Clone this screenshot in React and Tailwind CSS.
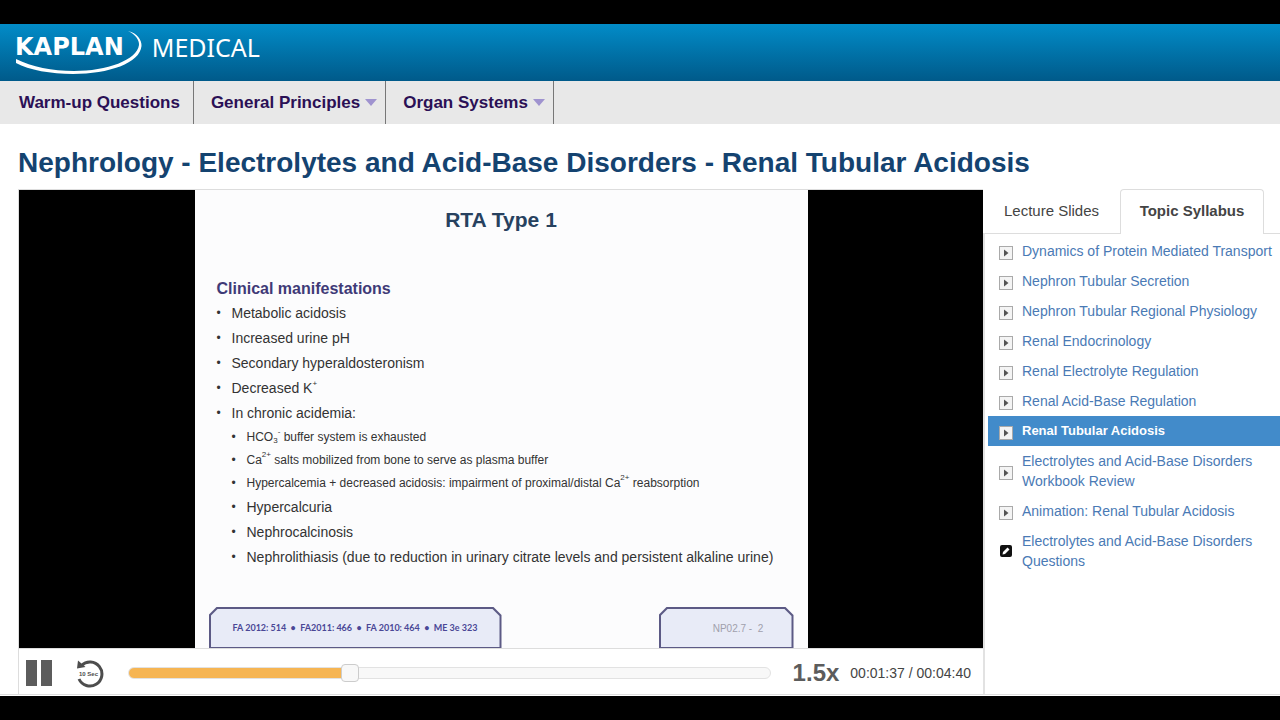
import React, { useState } from 'react';

const NAV_ITEMS = [
    { label: 'Warm-up Questions', hasMenu: false },
    { label: 'General Principles', hasMenu: true },
    { label: 'Organ Systems', hasMenu: true },
];

const TOPICS = [
    { title: 'Dynamics of Protein Mediated Transport', type: 'video' },
    { title: 'Nephron Tubular Secretion', type: 'video' },
    { title: 'Nephron Tubular Regional Physiology', type: 'video' },
    { title: 'Renal Endocrinology', type: 'video' },
    { title: 'Renal Electrolyte Regulation', type: 'video' },
    { title: 'Renal Acid-Base Regulation', type: 'video' },
    { title: 'Renal Tubular Acidosis', type: 'video' },
    { title: 'Electrolytes and Acid-Base Disorders Workbook Review', type: 'video' },
    { title: 'Animation: Renal Tubular Acidosis', type: 'video' },
    { title: 'Electrolytes and Acid-Base Disorders Questions', type: 'quiz' },
];

const Logo = () => (
    <a href="#home" className="relative flex items-center gap-7 text-white">
        <span className="font-['DejaVu_Sans',sans-serif] text-2xl leading-6 font-bold">KAPLAN</span>
        <span className="font-['Noto_Sans',sans-serif] text-[25px] leading-6">MEDICAL</span>
        <svg className="absolute -top-1 left-0" width="128" height="44" viewBox="0 0 128 44" fill="#fff" aria-hidden="true">
            <path d="M113 0 C122 2 127 9 126.500 15 C125 32 94 43 58 43 C36 43 14 39 1 32 L1 28 C17 36 37 40 59 40 C92 40 122 29 124 14 C124.500 9 120 3 113 0 Z" />
        </svg>
    </a>
);

const NavBar = () => (
    <nav className="flex bg-[#e8e8e8]">
        {NAV_ITEMS.map((item) => (
            <button
                key={item.label}
                className="flex h-[43px] items-center border-r border-[#777] pr-2 pl-[17px] text-[17px] font-bold text-[#2b1055] first:pr-[13px] first:pl-[19px]"
            >
                {item.label}
                {item.hasMenu && (
                    <span className="ml-[5px] border-x-[6px] border-t-[7px] border-x-transparent border-t-[#9f93cf]" />
                )}
            </button>
        ))}
    </nav>
);

const Bullet = ({ children, small = false }) => (
    <li className={`flex ${small ? 'text-xs leading-[23px]' : 'text-sm leading-[25px]'}`}>
        <span className="w-[15px] shrink-0 text-xs leading-[inherit]">•</span>
        <span className="whitespace-nowrap">{children}</span>
    </li>
);

const Sup = ({ children }) => <sup className="-top-[7px] text-[8px] leading-none">{children}</sup>;

const SlideTag = ({ children, className }) => (
    <div className={`bg-[#5c5a85] p-[2px] pb-px [clip-path:polygon(0_8px,8px_0,calc(100%-8px)_0,100%_8px,100%_100%,0_100%)] ${className}`}>
        <div className="flex h-[38px] items-center justify-center bg-[#e8ebf7] [clip-path:polygon(0_7px,7px_0,calc(100%-7px)_0,100%_7px,100%_100%,0_100%)]">
            {children}
        </div>
    </div>
);

const Slide = () => (
    <div className="flex w-[613px] flex-col bg-[#fcfcfd] px-[14px] pt-4 text-[#333]">
        <h2 className="text-center text-[21px] leading-7 font-bold text-[#27415f]">RTA Type 1</h2>
        <div className="mt-[43px] px-2">
            <h3 className="text-base leading-6 font-bold text-[#3f3a77]">Clinical manifestations</h3>
            <ul>
                <Bullet>Metabolic acidosis</Bullet>
                <Bullet>Increased urine pH</Bullet>
                <Bullet>Secondary hyperaldosteronism</Bullet>
                <Bullet>Decreased K<Sup>+</Sup></Bullet>
                <Bullet>In chronic acidemia:</Bullet>
            </ul>
            <ul className="pl-[15px]">
                <Bullet small>HCO<sub className="text-[8px] leading-none">3</sub><Sup>-</Sup> buffer system is exhausted</Bullet>
                <Bullet small>Ca<Sup>2+</Sup> salts mobilized from bone to serve as plasma buffer</Bullet>
                <Bullet small>Hypercalcemia + decreased acidosis: impairment of proximal/distal Ca<Sup>2+</Sup> reabsorption</Bullet>
                <Bullet>Hypercalcuria</Bullet>
                <Bullet>Nephrocalcinosis</Bullet>
                <Bullet>Nephrolithiasis (due to reduction in urinary citrate levels and persistent alkaline urine)</Bullet>
            </ul>
        </div>
        <div className="mt-auto flex justify-between">
            <SlideTag className="w-[293px]">
                <span className="font-['Lato',sans-serif] text-[9px] font-bold whitespace-pre text-[#4a4796]">
                    {'FA 2012: 514  •  FA2011: 466  •  FA 2010: 464  •  ME 3e 323'}
                </span>
            </SlideTag>
            <SlideTag className="w-[135px]">
                <span className="pl-6 text-[10px] whitespace-pre text-[#a0a0ac]">{'NP02.7 -  2'}</span>
            </SlideTag>
        </div>
    </div>
);

const RewindIcon = () => (
    <svg width="28" height="30" viewBox="0 0 28 30" aria-hidden="true">
        <path d="M5.500 7.500 A12 12 0 1 1 3 21" fill="none" stroke="#4d4d4d" strokeWidth="3" />
        <path d="M2 2.500 L1 10.500 L9.500 9 Z" fill="#4d4d4d" />
        <text x="3" y="18" fontSize="6" fontWeight="bold" fill="#4d4d4d" fontFamily="Liberation Sans, sans-serif">10 Sec</text>
    </svg>
);

const PlayerControls = () => {
    const [progress, setProgress] = useState(34);
    const [playing, setPlaying] = useState(true);

    return (
        <div className="flex h-[46px] items-center border-t border-[#ddd] pt-0.5 pr-3 pl-[7px]">
            <button aria-label={playing ? 'Pause' : 'Play'} onClick={() => setPlaying(!playing)} className="flex gap-1">
                <span className="h-[26px] w-[11px] bg-[#5c5c5c]" />
                <span className="h-[26px] w-[11px] bg-[#5c5c5c]" />
            </button>
            <button aria-label="Back 10 seconds" className="mx-6">
                <RewindIcon />
            </button>
            <input
                type="range"
                aria-label="Seek"
                min="0"
                max="100"
                value={progress}
                onChange={(e) => setProgress(Number(e.target.value))}
                className="h-3 min-w-0 flex-1 appearance-none rounded-md border border-[#e2e2e2] [&::-webkit-slider-thumb]:size-[18px] [&::-webkit-slider-thumb]:appearance-none [&::-webkit-slider-thumb]:rounded [&::-webkit-slider-thumb]:border [&::-webkit-slider-thumb]:border-[#ccc] [&::-webkit-slider-thumb]:bg-[#f8f8f8]"
                style={{ background: `linear-gradient(to right, #f6b553 ${progress}%, #f8f8f8 ${progress}%)` }}
            />
            <button aria-label="Playback speed" className="ml-[22px] text-2xl leading-8 font-bold text-[#5c5c5c]">
                1.5x
            </button>
            <span className="ml-[11px] text-sm text-[#444]">00:01:37 / 00:04:40</span>
        </div>
    );
};

const TopicIcon = ({ type }) => {
    if (type === 'quiz') {
        return (
            <svg className="mx-px shrink-0" width="12" height="12" viewBox="0 0 12 12" aria-hidden="true">
                <rect width="12" height="12" rx="2" fill="#111" />
                <path d="M2.500 9.500 L3 7 L7.500 2.500 L9.500 4.500 L5 9 Z" fill="#fff" />
            </svg>
        );
    }
    return (
        <svg className="mt-[3px] shrink-0" width="14" height="14" viewBox="0 0 14 14" aria-hidden="true">
            <rect x="0.500" y="0.500" width="13" height="13" fill="#f4f4f4" stroke="#aaa" />
            <path d="M5 3.500 L9.500 7 L5 10.500 Z" fill="#555" />
        </svg>
    );
};

const Sidebar = () => {
    const [tab, setTab] = useState('syllabus');
    const [active, setActive] = useState(6);

    const tabClass = (name) =>
        tab === name
            ? 'rounded-t border border-b-0 border-[#ddd] pb-px font-bold'
            : 'border-b border-[#ddd]';

    return (
        <aside className="flex w-[297px] shrink-0 flex-col">
            <div role="tablist" className="flex h-[45px] text-[15px] text-[#444]">
                <button role="tab" aria-selected={tab === 'slides'} onClick={() => setTab('slides')} className={`w-[137px] ${tabClass('slides')}`}>
                    Lecture Slides
                </button>
                <button role="tab" aria-selected={tab === 'syllabus'} onClick={() => setTab('syllabus')} className={`w-36 ${tabClass('syllabus')}`}>
                    Topic Syllabus
                </button>
                <div className="flex-1 border-b border-[#ddd]" />
            </div>
            <ul className="flex-1 border-l-2 border-[#e2e2e2] pt-0.5 pl-[3px]">
                {TOPICS.map((topic, i) => (
                    <li key={topic.title}>
                        <a
                            href="#topic"
                            onClick={() => setActive(i)}
                            className={`flex items-center gap-[9px] py-[5px] pr-2 pl-[11px] leading-5 ${active === i ? 'bg-[#428bca] text-[13px] font-bold text-white' : 'text-[14px] text-[#4a7ab5]'}`}
                        >
                            <TopicIcon type={topic.type} />
                            <span className="leading-5">{topic.title}</span>
                        </a>
                    </li>
                ))}
            </ul>
        </aside>
    );
};

const App = () => (
    <div className="flex min-h-screen flex-col border-y-[24px] border-black bg-white font-['Liberation_Sans',Arial,sans-serif]">
        <header className="flex h-[57px] items-center bg-linear-to-b from-[#028cc8] to-[#005a8a] pb-3 pl-[15px]">
            <Logo />
        </header>
        <NavBar />
        <h1 className="px-[18px] pt-6 pb-[11px] text-[28px] leading-[30px] font-bold text-[#144370]">
            Nephrology - Electrolytes and Acid-Base Disorders - Renal Tubular Acidosis
        </h1>
        <main className="mb-px flex flex-1 border-b border-[#ddd] pl-[18px]">
            <section className="flex min-w-0 flex-1 flex-col border-t border-l border-[#ddd]">
                <div className="flex flex-1 justify-center bg-black">
                    <Slide />
                </div>
                <PlayerControls />
            </section>
            <Sidebar />
        </main>
    </div>
);

export default App;
